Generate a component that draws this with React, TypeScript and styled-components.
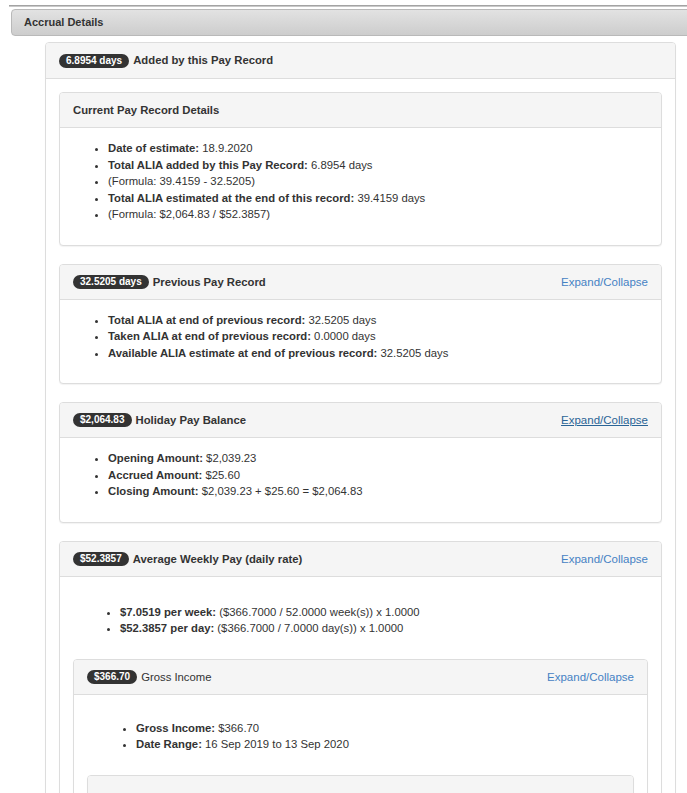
import React from 'react'
import styled, { createGlobalStyle } from 'styled-components'

const GlobalStyle = createGlobalStyle`
  html, body {
    margin: 0;
    padding: 0;
    background: #fff;
    overflow: hidden;
  }
  body {
    font-family: "Liberation Sans", Arial, Helvetica, sans-serif;
    font-size: 11.3px;
    line-height: 16.5px;
    color: #333;
  }
`

const Page = styled.div`
  padding: 5px 0 0 9px;
`

const TopRule = styled.div`
  height: 1px;
  border-top: 1px solid #a3a3a3;
  background: #c9c9c9;
`

const SectionBar = styled.div`
  box-sizing: border-box;
  height: 27px;
  margin: 2px -20px 0 2px;
  padding: 0 12px;
  display: flex;
  align-items: center;
  border: 1px solid #b9b9b9;
  border-radius: 4px 0 0 4px;
  background: linear-gradient(#e2e2e2, #cdcdcd);
  font-weight: bold;
  font-size: 11px;
  color: #333;
`

const Panel = styled.div<{ $outer?: boolean }>`
  border: 1px solid #ddd;
  border-radius: 4px;
  background: #fff;
  box-shadow: 0 1px 1px rgba(0, 0, 0, 0.05);
  margin: ${p => (p.$outer ? '6px 11px 0 36px' : '0 0 18px 0')};
`

const PanelHeading = styled.div<{ $tall?: boolean }>`
  display: flex;
  align-items: center;
  justify-content: space-between;
  padding: 9px 13px;
  line-height: ${p => (p.$tall ? 17 : 16)}px;
  min-height: ${p => (p.$tall ? 17 : 16)}px;
  background: #f5f5f5;
  border-bottom: 1px solid #ddd;
  border-radius: 3px 3px 0 0;
`

const HeadingTitle = styled.div<{ $light?: boolean }>`
  display: flex;
  align-items: center;
  gap: 4px;
  font-weight: ${p => (p.$light ? 'normal' : 'bold')};
`

const Badge = styled.span`
  display: inline-block;
  padding: 2px 7px;
  font-size: 10px;
  font-weight: bold;
  line-height: 10px;
  color: #fff;
  background: #333;
  border-radius: 10px;
  white-space: nowrap;
`

const ToggleLink = styled.a<{ $active?: boolean }>`
  font-size: 11.5px;
  color: ${p => (p.$active ? '#2a6496' : '#4582c4')};
  text-decoration: ${p => (p.$active ? 'underline' : 'none')};
  cursor: pointer;
`

const PanelBody = styled.div<{ $outer?: boolean }>`
  padding: ${p => (p.$outer ? '13px' : '12px 13px 14px')};
`

const StatList = styled.ul<{ $top?: number; $indent?: number }>`
  margin: ${p => (p.$top ? `${p.$top}px 0 22px` : '0 0 8px')};
  padding-left: ${p => p.$indent ?? 35}px;
  li {
    line-height: 16.5px;
  }
`

type Row = [string, string]

const Stats: React.FC<{ rows: Row[]; top?: number; indent?: number }> = ({ rows, top, indent }) => (
  <StatList $top={top} $indent={indent}>
    {rows.map(([label, value], i) => (
      <li key={i}>
        {label && <b>{label} </b>}
        {value}
      </li>
    ))}
  </StatList>
)

const Heading: React.FC<{
  badge?: string
  title?: string
  light?: boolean
  toggle?: boolean
  active?: boolean
  tall?: boolean
}> = ({ badge, title, light, toggle, active, tall }) => (
  <PanelHeading $tall={tall}>
    <HeadingTitle $light={light}>
      {badge && <Badge>{badge}</Badge>}
      {title && <span>{title}</span>}
    </HeadingTitle>
    {toggle && <ToggleLink $active={active}>Expand/Collapse</ToggleLink>}
  </PanelHeading>
)

export default function App() {
  return (
    <Page>
      <GlobalStyle />
      <TopRule />
      <SectionBar>Accrual Details</SectionBar>
      <Panel $outer>
        <Heading badge="6.8954 days" title="Added by this Pay Record" tall />
        <PanelBody $outer>
          <Panel>
            <Heading title="Current Pay Record Details" />
            <PanelBody>
              <Stats
                rows={[
                  ['Date of estimate:', '18.9.2020'],
                  ['Total ALIA added by this Pay Record:', '6.8954 days'],
                  ['', '(Formula: 39.4159 - 32.5205)'],
                  ['Total ALIA estimated at the end of this record:', '39.4159 days'],
                  ['', '(Formula: $2,064.83 / $52.3857)'],
                ]}
              />
            </PanelBody>
          </Panel>

          <Panel>
            <Heading badge="32.5205 days" title="Previous Pay Record" toggle />
            <PanelBody>
              <Stats
                rows={[
                  ['Total ALIA at end of previous record:', '32.5205 days'],
                  ['Taken ALIA at end of previous record:', '0.0000 days'],
                  ['Available ALIA estimate at end of previous record:', '32.5205 days'],
                ]}
              />
            </PanelBody>
          </Panel>

          <Panel>
            <Heading badge="$2,064.83" title="Holiday Pay Balance" toggle active />
            <PanelBody>
              <Stats
                rows={[
                  ['Opening Amount:', '$2,039.23'],
                  ['Accrued Amount:', '$25.60'],
                  ['Closing Amount:', '$2,039.23 + $25.60 = $2,064.83'],
                ]}
              />
            </PanelBody>
          </Panel>

          <Panel>
            <Heading badge="$52.3857" title="Average Weekly Pay (daily rate)" toggle />
            <PanelBody>
              <Stats
                top={15}
                indent={47}
                rows={[
                  ['$7.0519 per week:', '($366.7000 / 52.0000 week(s)) x 1.0000'],
                  ['$52.3857 per day:', '($366.7000 / 7.0000 day(s)) x 1.0000'],
                ]}
              />
              <Panel>
                <Heading badge="$366.70" title="Gross Income" light toggle />
                <PanelBody>
                  <Stats
                    top={13}
                    indent={49}
                    rows={[
                      ['Gross Income:', '$366.70'],
                      ['Date Range:', '16 Sep 2019 to 13 Sep 2020'],
                    ]}
                  />
                  <Panel>
                    <Heading />
                    <PanelBody />
                  </Panel>
                </PanelBody>
              </Panel>
            </PanelBody>
          </Panel>
        </PanelBody>
      </Panel>
    </Page>
  )
}
